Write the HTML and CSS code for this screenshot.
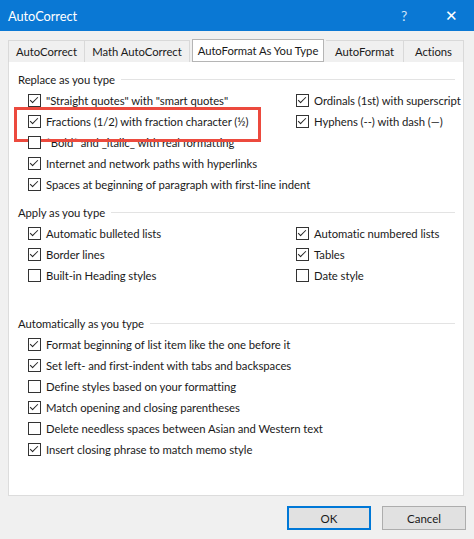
FILE: index.html
```html
<!DOCTYPE html>
<html lang="en">

<head>
    <meta charset="UTF-8">
    <title>AutoCorrect</title>
    <link rel="stylesheet" href="styles.css">
</head>

<body>
    <div class="dialog">
        <div class="titlebar">
            <span class="title">AutoCorrect</span>
            <span class="help">?</span>
            <span class="close">&#x2715;</span>
        </div>

        <div class="tabs">
            <div class="tab t1">AutoCorrect</div>
            <div class="tab t2">Math AutoCorrect</div>
            <div class="tab t3 active">AutoFormat As You Type</div>
            <div class="tab t4">AutoFormat</div>
            <div class="tab t5">Actions</div>
        </div>

        <div class="panel">
            <div class="highlight"></div>

            <div class="heading">Replace as you type</div>
            <div class="rows">
                <label class="row"><span class="box on"></span>"Straight quotes" with "smart quotes"</label>
                <label class="row"><span class="box on"></span>Ordinals (1st) with superscript</label>
                <label class="row"><span class="box on"></span>Fractions (1/2) with fraction character (½)</label>
                <label class="row"><span class="box on"></span>Hyphens (--) with dash (—)</label>
                <label class="row wide"><span class="box"></span>*Bold* and _italic_ with real formatting</label>
                <label class="row wide"><span class="box on"></span>Internet and network paths with hyperlinks</label>
                <label class="row wide"><span class="box on"></span>Spaces at beginning of paragraph with first-line indent</label>
            </div>

            <div class="heading second">Apply as you type</div>
            <div class="rows">
                <label class="row"><span class="box on"></span>Automatic bulleted lists</label>
                <label class="row"><span class="box on"></span>Automatic numbered lists</label>
                <label class="row"><span class="box on"></span>Border lines</label>
                <label class="row"><span class="box on"></span>Tables</label>
                <label class="row"><span class="box"></span>Built-in Heading styles</label>
                <label class="row"><span class="box"></span>Date style</label>
            </div>

            <div class="heading third">Automatically as you type</div>
            <div class="rows">
                <label class="row wide"><span class="box on"></span>Format beginning of list item like the one before it</label>
                <label class="row wide"><span class="box on"></span>Set left- and first-indent with tabs and backspaces</label>
                <label class="row wide"><span class="box"></span>Define styles based on your formatting</label>
                <label class="row wide"><span class="box on"></span>Match opening and closing parentheses</label>
                <label class="row wide"><span class="box"></span>Delete needless spaces between Asian and Western text</label>
                <label class="row wide"><span class="box on"></span>Insert closing phrase to match memo style</label>
            </div>
        </div>

        <div class="buttons">
            <button class="btn ok">OK</button>
            <button class="btn">Cancel</button>
        </div>
    </div>
</body>

</html>
```

FILE: styles.css
```css
body {
    margin: 0;
    background: #f0f0f0;
    font-family: Lato, "Noto Sans", sans-serif;
    font-size: 11.3px;
    letter-spacing: -0.05px;
    color: #1a1a1a;
}

.dialog {
    width: 474px;
    height: 539px;
    background: #f0f0f0;
}

.titlebar {
    height: 31px;
    background: #0a78d4;
    color: white;
    display: flex;
    align-items: center;
    padding-left: 8px;
}

.title {
    font-size: 12.8px;
    flex: 1;
}

.help {
    font-size: 14px;
    width: 48px;
    text-align: center;
    color: #cfe4f7;
}

.close {
    font-size: 15px;
    width: 46px;
    text-align: center;
}

.tabs {
    display: flex;
    align-items: flex-end;
    height: 31px;
    padding-left: 8px;
}

.tab {
    height: 22px;
    line-height: 21px;
    box-sizing: border-box;
    border: 1px solid #d9d9d9;
    border-bottom: none;
    border-left: none;
    text-align: center;
    background: #f0f0f0;
}

.t1 { width: 77px; border-left: 1px solid #d9d9d9; }
.t2 { width: 105px; }
.t3 { width: 132px; }
.t4 { width: 78px; }
.t5 { width: 60px; }

.tab.active {
    background: white;
    border: 1px solid #b5b5b5;
    height: 23px;
    line-height: 22px;
    margin-left: 2px;
    margin-right: 2px;
}

.panel {
    position: relative;
    width: 456px;
    height: 434px;
    margin-left: 8px;
    box-sizing: border-box;
    background: white;
    border: 1px solid #dcdcdc;
    border-top: none;
    padding: 6px 8px 0 9px;
}

.heading {
    height: 22px;
    display: flex;
    align-items: center;
    gap: 6px;
    color: #1a1a1a;
}

.heading::after {
    content: "";
    flex: 1;
    height: 1px;
    background: #e3e3e3;
}

.heading.second { margin-top: 6px; }
.heading.third { margin-top: 26px; }

.rows {
    display: grid;
    grid-template-columns: 268px auto;
    padding-left: 10px;
}

.row {
    height: 21px;
    display: flex;
    align-items: center;
    gap: 5px;
    white-space: nowrap;
}

.row.wide {
    grid-column: 1 / 3;
}

.box {
    width: 13px;
    height: 13px;
    box-sizing: border-box;
    border: 1px solid #333;
    background: white;
    position: relative;
    flex: none;
}

.box.on::after {
    content: "";
    position: absolute;
    left: 3px;
    top: 0px;
    width: 3px;
    height: 7px;
    border-right: 1.2px solid #222;
    border-bottom: 1.2px solid #222;
    transform: rotate(45deg);
}

.highlight {
    position: absolute;
    left: 5px;
    top: 45px;
    width: 247px;
    height: 35px;
    box-sizing: border-box;
    border: 3px solid #ec4a3e;
}

.buttons {
    display: flex;
    justify-content: flex-end;
    gap: 11px;
    padding: 10px 8px 0 0;
}

.btn {
    width: 84px;
    height: 24px;
    font-family: inherit;
    font-size: 11.5px;
    color: #1a1a1a;
    background: #e1e1e1;
    border: 1px solid #adadad;
}

.btn.ok {
    border: 2px solid #0078d7;
}
```
